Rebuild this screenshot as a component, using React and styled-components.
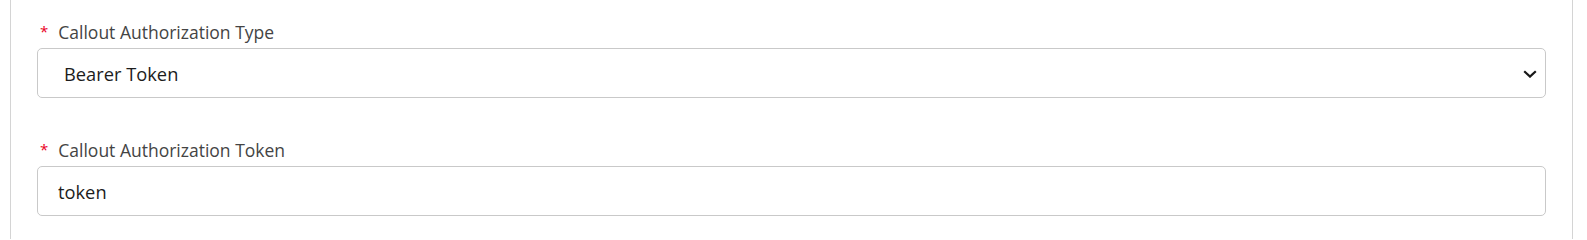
import styled, { createGlobalStyle } from "styled-components";

const GlobalStyle = createGlobalStyle`
  html, body {
    margin: 0;
    padding: 0;
    background: #ffffff;
  }
  body {
    font-family: "Open Sans", "Noto Sans", Arial, sans-serif;
  }
`;

const Panel = styled.div`
  box-sizing: border-box;
  margin-left: 10px;
  width: 1563px;
  min-height: 239px;
  padding: 21px 26px 0;
  background: #ffffff;
  border-left: 1px solid #d4d4d4;
  border-right: 1px solid #d4d4d4;
`;

const Field = styled.div`
  display: flex;
  flex-direction: column;
  margin-bottom: 41px;
`;

const Label = styled.label`
  display: flex;
  align-items: center;
  height: 22px;
  margin-bottom: 5px;
  padding-left: 3px;
  font-size: 17.5px;
  line-height: 22px;
  color: #444444;

  abbr {
    color: #ea001e;
    text-decoration: none;
    font-size: 15px;
    margin-right: 10px;
    margin-top: -2px;
  }
`;

const SelectBox = styled.div`
  box-sizing: border-box;
  height: 50px;
  display: flex;
  align-items: center;
  justify-content: space-between;
  padding: 1px 8px 0 26px;
  border: 1px solid #c9c9c9;
  border-radius: 5px;
  background: #ffffff;
  font-size: 18.3px;
  color: #1c1c1c;
`;

const Chevron = styled.svg`
  width: 14px;
  height: 8px;
  flex-shrink: 0;
`;

const TextInput = styled.input`
  box-sizing: border-box;
  height: 50px;
  width: 100%;
  padding: 1px 20px 0;
  border: 1px solid #c9c9c9;
  border-radius: 5px;
  background: #ffffff;
  font-family: inherit;
  font-size: 18.3px;
  color: #1c1c1c;
  outline: none;
`;

function RequiredLabel({ children }) {
  return (
    <Label>
      <abbr title="required">*</abbr>
      {children}
    </Label>
  );
}

export default function App() {
  return (
    <>
      <GlobalStyle />
      <Panel>
        <Field>
          <RequiredLabel>Callout Authorization Type</RequiredLabel>
          <SelectBox>
            <span>Bearer Token</span>
            <Chevron viewBox="0 0 14 8">
              <polyline
                points="1.2,1.2 7,6.6 12.8,1.2"
                fill="none"
                stroke="#181818"
                strokeWidth="2.2"
              />
            </Chevron>
          </SelectBox>
        </Field>
        <Field>
          <RequiredLabel>Callout Authorization Token</RequiredLabel>
          <TextInput defaultValue="token" />
        </Field>
      </Panel>
    </>
  );
}
